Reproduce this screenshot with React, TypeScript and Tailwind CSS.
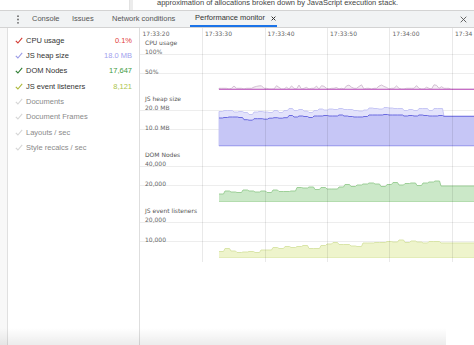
import React from "react";

function rng(seed: number) {
  let a = seed;
  return () => {
    a |= 0;
    a = (a + 0x6d2b79f5) | 0;
    let t = Math.imul(a ^ (a >>> 15), 1 | a);
    t = (t + Math.imul(t ^ (t >>> 7), 61 | t)) ^ t;
    return ((t ^ (t >>> 14)) >>> 0) / 4294967296;
  };
}

const X0 = 79;
const XE = 306;
const W = 334;
const H = 56;
const BASE = 52;

function makeVals(seed: number, n: number, from: number, to: number, noise: number) {
  const r = rng(seed);
  const out: number[] = [];
  let walk = 0;
  for (let i = 0; i < n; i++) {
    walk = walk * 0.5 + (r() - 0.5) * 2 * noise;
    const v = from + ((to - from) * i) / (n - 1) + walk;
    out.push(Math.round(v * 2) / 2);
  }
  return out;
}

function stepEdge(vals: number[], step: number, finalY: number) {
  const pts: [number, number][] = [[X0, vals[0]]];
  for (let i = 0; i < vals.length; i++) {
    const nx = X0 + (i + 1) * step;
    pts.push([nx - 1.5, vals[i]]);
    const ny = i + 1 < vals.length ? vals[i + 1] : finalY;
    pts.push([nx, ny]);
  }
  pts.push([W, finalY]);
  return pts;
}

function toArea(pts: [number, number][], base: number) {
  return (
    `M${X0},${base} ` +
    pts.map((p) => `L${p[0].toFixed(1)},${p[1].toFixed(1)}`).join(" ") +
    ` L${W},${base} Z`
  );
}
function toLine(pts: [number, number][]) {
  return pts.map((p, i) => `${i ? "L" : "M"}${p[0].toFixed(1)},${p[1].toFixed(1)}`).join(" ");
}

const VLINES = [62.5, 125.5, 187.5, 249.5, 312.5];

function VGrid({ h }: { h: number }) {
  return (
    <>
      {VLINES.map((x) => (
        <line key={x} x1={x} x2={x} y1={0} y2={h} stroke="rgba(0,0,0,0.085)" strokeWidth={1} />
      ))}
    </>
  );
}

function HGrid() {
  return (
    <>
      <line x1={0} x2={W} y1={16.5} y2={16.5} stroke="#ededed" />
      <line x1={0} x2={W} y1={35.5} y2={35.5} stroke="#ededed" />
    </>
  );
}

// CPU
const cpuR = rng(11);
const cpuTop: [number, number][] = [];
for (let x = X0; x <= 309; x += 2.5) {
  const b = cpuR();
  const y = b < 0.38 ? 49.6 - cpuR() * 3 : b < 0.7 ? 50.3 : 51;
  cpuTop.push([x, y]);
}
cpuTop.push([311, 51.3]);
cpuTop.push([W, 51.3]);

// Heap
const heapStep = 5;
const heapN = Math.floor((XE - X0) / heapStep);
const heapDark = makeVals(21, heapN, 24, 20.5, 1.2).map((v, i) =>
  i > 4 && i < 14 ? v + 1.2 : v
);
const heapR = rng(33);
const heapLight = heapDark.map((v) => Math.round((v - 5 - heapR() * 2.5) * 2) / 2);
const heapDarkPts = stepEdge(heapDark, heapStep, 22.3);
const heapLightPts = stepEdge(heapLight, heapStep, 22.3);

// DOM
const domStep = 6;
const domN = Math.floor((XE - X0) / domStep);
const domVals = makeVals(5, domN, 43, 32.5, 2.4);
domVals[1] = 41;
const domPts = stepEdge(domVals, domStep, 36);

// Listeners
const lisVals = makeVals(8, domN, 47, 34, 2.4);
lisVals[1] = 42.5;
const lisPts = stepEdge(lisVals, domStep, 37);

function Section({
  label,
  top,
  mid,
  children,
}: {
  label: string;
  top: string;
  mid: string;
  children: React.ReactNode;
}) {
  return (
    <div className="relative h-[56px] shrink-0 flex flex-col pl-[5px] text-[6px] leading-[7px] text-[#666]">
      <svg className="absolute inset-0" width={W} height={H} viewBox={`0 0 ${W} ${H}`}>
        <HGrid />
        {children}
        <VGrid h={H} />
      </svg>
      <span className="relative mt-[0.5px] text-[#555]">{label}</span>
      <span className="relative mt-[2px]">{top}</span>
      <span className="relative mt-[13px]">{mid}</span>
    </div>
  );
}

const metrics = [
  { label: "CPU usage", value: "0.1%", check: "#d33a32", vc: "#e2403a", on: true },
  { label: "JS heap size", value: "18.0 MB", check: "#9a9ae6", vc: "#a0a0ee", on: true },
  { label: "DOM Nodes", value: "17,647", check: "#2e7d32", vc: "#3f9b3f", on: true },
  { label: "JS event listeners", value: "8,121", check: "#acb83a", vc: "#aac44c", on: true },
  { label: "Documents", value: "", check: "#d6d6d6", vc: "", on: false },
  { label: "Document Frames", value: "", check: "#d6d6d6", vc: "", on: false },
  { label: "Layouts / sec", value: "", check: "#d6d6d6", vc: "", on: false },
  { label: "Style recalcs / sec", value: "", check: "#d6d6d6", vc: "", on: false },
];

const times = ["17:33:20", "17:33:30", "17:33:40", "17:33:50", "17:34:00", "17:34"];

export default function App() {
  return (
    <div
      className="relative w-[474px] h-[345px] overflow-hidden bg-white flex flex-col"
      style={{ fontFamily: '"Liberation Sans", Arial, sans-serif' }}
    >
      {/* top strip */}
      <div className="h-[10px] flex bg-[#ececec] shrink-0">
        <div className="w-[129px] shrink-0 bg-white" />
        <div className="w-[4px] shrink-0 border-l border-[#e2e2e2]" />
        <div className="flex-1 min-w-0 bg-white overflow-hidden pl-[24px]">
          <div className="-mt-[1.5px] text-[7.5px] leading-[8px] text-[#444] whitespace-nowrap">
            approximation of allocations broken down by JavaScript execution stack.
          </div>
        </div>
      </div>

      {/* tab bar */}
      <div className="h-[18px] shrink-0 flex items-stretch bg-[#f1f3f4] border-t border-b border-[#d3d3d3] text-[7.5px] text-[#555] whitespace-nowrap">
        <div className="w-[32px] shrink-0 flex items-center">
          <svg width="4" height="9" viewBox="0 0 4 9" className="ml-[16px]">
            <circle cx="2" cy="1.2" r="0.9" fill="#666" />
            <circle cx="2" cy="4.5" r="0.9" fill="#666" />
            <circle cx="2" cy="7.8" r="0.9" fill="#666" />
          </svg>
        </div>
        <div className="w-[40px] shrink-0 flex items-center">Console</div>
        <div className="w-[40px] shrink-0 flex items-center">Issues</div>
        <div className="w-[78px] shrink-0 flex items-center">Network conditions</div>
        <div className="w-[87px] shrink-0 pl-[5px] flex items-center gap-[6px] text-[#333] border-b-2 border-[#1a73e8]">
          <span>Performance monitor</span>
          <svg width="5" height="5" viewBox="0 0 5 5">
            <path d="M0.6 0.6 L4.4 4.4 M4.4 0.6 L0.6 4.4" stroke="#333" strokeWidth="1" />
          </svg>
        </div>
        <div className="flex-1" />
        <div className="w-[14px] shrink-0 flex items-center">
          <svg width="7" height="7" viewBox="0 0 7 7">
            <path d="M0.7 0.7 L6.3 6.3 M6.3 0.7 L0.7 6.3" stroke="#555" strokeWidth="0.9" />
          </svg>
        </div>
      </div>

      {/* main */}
      <div className="flex-1 flex min-h-0">
        <div className="w-[8px] shrink-0 bg-[#f8f8f8] border-r border-[#e0e0e0]" />
        <div className="w-[132px] shrink-0 border-r border-[#dedede] pt-[4.5px] pr-[7px] text-[7.5px] whitespace-nowrap">
          {metrics.map((m) => (
            <div key={m.label} className="h-[15.35px] flex items-center">
              <svg width="8" height="7" viewBox="0 0 8 7" className="ml-[7px] shrink-0">
                <polyline points="0.8,3.8 2.9,6 7.2,0.8" fill="none" stroke={m.check} strokeWidth="1.1" />
              </svg>
              <span className={"ml-[3px] " + (m.on ? "text-[#333]" : "text-[#8a8a8a]")}>{m.label}</span>
              <span className="ml-auto" style={{ color: m.vc }}>
                {m.value}
              </span>
            </div>
          ))}
        </div>

        <div
          className="flex-1 min-w-0 overflow-hidden flex flex-col"
          style={{ fontFamily: '"DejaVu Sans", sans-serif' }}
        >
          {/* header */}
          <div className="relative h-[10px] shrink-0 flex text-[6px] leading-[7px] text-[#666] pt-[2px] whitespace-nowrap">
            <svg className="absolute inset-0" width={W} height={10} viewBox={`0 0 ${W} 10`}>
              <VGrid h={10} />
            </svg>
            {times.map((t) => (
              <div key={t} className="relative w-[62.5px] shrink-0 pl-[2.5px]">
                {t}
              </div>
            ))}
          </div>

          <Section label="CPU usage" top="100%" mid="50%">
            <path d={toArea(cpuTop, 51.3)} fill="rgba(190,160,190,0.16)" stroke="#c9b3c9" strokeWidth={0.8} />
            <line x1={X0} x2={W} y1={51.3} y2={51.3} stroke="#c35bc3" strokeWidth={1} />
          </Section>

          <Section label="JS heap size" top="20.0 MB" mid="10.0 MB">
            <path d={toArea(heapLightPts, BASE)} fill="#e3e3fb" stroke="#bdbdf2" strokeWidth={0.8} />
            <path d={toArea(heapDarkPts, BASE)} fill="#c6c6f6" />
            <path d={toLine(heapDarkPts)} fill="none" stroke="#6b6be0" strokeWidth={1} />
            <line x1={X0} x2={W} y1={BASE - 0.5} y2={BASE - 0.5} stroke="#a3a3ee" strokeWidth={1} />
          </Section>

          <Section label="DOM Nodes" top="40,000" mid="20,000">
            <path d={toArea(domPts, BASE)} fill="#cbe8c8" />
            <path d={toLine(domPts)} fill="none" stroke="#95cc90" strokeWidth={0.9} />
            <line x1={X0} x2={W} y1={BASE - 0.5} y2={BASE - 0.5} stroke="#b3dcae" strokeWidth={1} />
          </Section>

          <Section label="JS event listeners" top="20,000" mid="10,000">
            <path d={toArea(lisPts, BASE)} fill="#eef4cc" />
            <path d={toLine(lisPts)} fill="none" stroke="#d6e2a2" strokeWidth={0.9} />
            <line x1={X0} x2={W} y1={BASE - 0.5} y2={BASE - 0.5} stroke="#e3ecb8" strokeWidth={1} />
          </Section>
        </div>
      </div>

      {/* bottom shade */}
      <div className="pointer-events-none absolute bottom-0 left-0 right-[28px] h-[17px] bg-[linear-gradient(to_bottom,rgba(0,0,0,0),rgba(0,0,0,0.075))]" />
    </div>
  );
}
